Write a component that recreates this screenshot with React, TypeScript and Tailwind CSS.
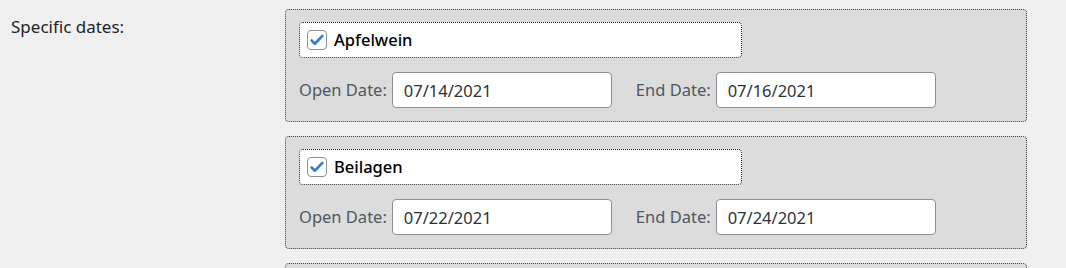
import React from 'react';

type Item = { name: string; open: string; end: string };

const items: Item[] = [
  { name: 'Apfelwein', open: '07/14/2021', end: '07/16/2021' },
  { name: 'Beilagen', open: '07/22/2021', end: '07/24/2021' },
];

function Check() {
  return (
    <span className="flex h-[20px] w-[20px] shrink-0 items-center justify-center rounded-[4px] border border-[#8c8f94] bg-white">
      <svg viewBox="0 0 20 20" className="h-[18px] w-[18px]">
        <path d="M4 10.5l3.6 3.6L16 5.4" fill="none" stroke="#3582c4" strokeWidth="3" strokeLinecap="round" strokeLinejoin="round" />
      </svg>
    </span>
  );
}

function DateField({ label, value }: { label: string; value: string }) {
  return (
    <label className="flex items-center">
      <span className="text-[#50575e]">{label}</span>
      <input
        readOnly
        value={value}
        className="ml-[5px] h-[36px] w-[220px] rounded-[4px] border border-[#8c8f94] bg-white px-[11px] text-[#2c3338] outline-none"
      />
    </label>
  );
}

function DateBox({ item }: { item: Item }) {
  return (
    <div className="rounded-[4px] border border-dotted border-[#3c434a] bg-[#dcdcdc] px-[13px] pt-[12px] pb-[13px]">
      <div className="flex h-[36px] w-[443px] items-center gap-[7px] rounded-[4px] border border-dotted border-[#1d2327] bg-white px-[7px]">
        <Check />
        <span className="text-[16.5px] font-medium text-black">{item.name}</span>
      </div>
      <div className="mt-[14px] flex items-center gap-[24px]">
        <DateField label="Open Date:" value={item.open} />
        <DateField label="End Date:" value={item.end} />
      </div>
    </div>
  );
}

export default function App() {
  return (
    <div
      className="flex h-[268px] overflow-hidden bg-[#f0f0f0] text-[16.5px] text-[#1d2327]"
      style={{ fontFamily: '"Noto Sans", "Open Sans", sans-serif' }}
    >
      <div className="w-[285px] shrink-0 pl-[11px] pt-[14px] text-[17px] leading-[26px]">Specific dates:</div>
      <div className="flex w-[742px] flex-col gap-[14px] pt-[9px]">
        {items.map((it) => (
          <DateBox key={it.name} item={it} />
        ))}
        {/* next entry, only its top edge is in view */}
        <div className="h-[113px] shrink-0 rounded-[4px] border border-dotted border-[#3c434a] bg-[#dcdcdc]" />
      </div>
    </div>
  );
}
